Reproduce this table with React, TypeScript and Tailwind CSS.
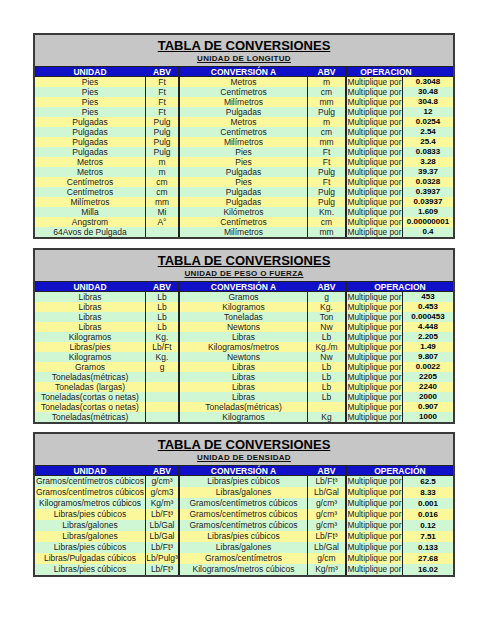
import React from "react";

type Row = [string, string, string, string, string];

type Props = {
  subtitle: string;
  conv: string;
  op: string;
  rows: Row[];
  startGreen?: boolean;
  rowH: string;
  opShift?: boolean;
};

const longitud: Row[] = [
  ["Pies", "Ft", "Metros", "m", "0.3048"],
  ["Pies", "Ft", "Centímetros", "cm", "30.48"],
  ["Pies", "Ft", "Milímetros", "mm", "304.8"],
  ["Pies", "Ft", "Pulgadas", "Pulg", "12"],
  ["Pulgadas", "Pulg", "Metros", "m", "0.0254"],
  ["Pulgadas", "Pulg", "Centímetros", "cm", "2.54"],
  ["Pulgadas", "Pulg", "Milímetros", "mm", "25.4"],
  ["Pulgadas", "Pulg", "Pies", "Ft", "0.0833"],
  ["Metros", "m", "Pies", "Ft", "3.28"],
  ["Metros", "m", "Pulgadas", "Pulg", "39.37"],
  ["Centímetros", "cm", "Pies", "Ft", "0.0328"],
  ["Centímetros", "cm", "Pulgadas", "Pulg", "0.3937"],
  ["Milímetros", "mm", "Pulgadas", "Pulg", "0.03937"],
  ["Milla", "Mi", "Kilómetros", "Km.", "1.609"],
  ["Angstrom", "A°", "Centímetros", "cm", "0.00000001"],
  ["64Avos de Pulgada", "", "Milímetros", "mm", "0.4"],
];

const peso: Row[] = [
  ["Libras", "Lb", "Gramos", "g", "453"],
  ["Libras", "Lb", "Kilogramos", "Kg.", "0.453"],
  ["Libras", "Lb", "Toneladas", "Ton", "0.000453"],
  ["Libras", "Lb", "Newtons", "Nw", "4.448"],
  ["Kilogramos", "Kg.", "Libras", "Lb", "2.205"],
  ["Libras/pies", "Lb/Ft", "Kilogramos/metros", "Kg./m", "1.49"],
  ["Kilogramos", "Kg.", "Newtons", "Nw", "9.807"],
  ["Gramos", "g", "Libras", "Lb", "0.0022"],
  ["Toneladas(métricas)", "", "Libras", "Lb", "2205"],
  ["Toneladas (largas)", "", "Libras", "Lb", "2240"],
  ["Toneladas(cortas o netas)", "", "Libras", "Lb", "2000"],
  ["Toneladas(cortas o netas)", "", "Toneladas(métricas)", "", "0.907"],
  ["Toneladas(métricas)", "", "Kilogramos", "Kg", "1000"],
];

const densidad: Row[] = [
  ["Gramos/centímetros cúbicos", "g/cm³", "Libras/pies cúbicos", "Lb/Ft³", "62.5"],
  ["Gramos/centímetros cúbicos", "g/cm3", "Libras/galones", "Lb/Gal", "8.33"],
  ["Kilogramos/metros cúbicos", "Kg/m³", "Gramos/centímetros cúbicos", "g/cm³", "0.001"],
  ["Libras/pies cúbicos", "Lb/Ft³", "Gramos/centímetros cúbicos", "g/cm³", "0.016"],
  ["Libras/galones", "Lb/Gal", "Gramos/centímetros cúbicos", "g/cm³", "0.12"],
  ["Libras/galones", "Lb/Gal", "Libras/pies cúbicos", "Lb/Ft³", "7.51"],
  ["Libras/pies cúbicos", "Lb/Ft³", "Libras/galones", "Lb/Gal", "0.133"],
  ["Libras/Pulgadas cúbicos", "Lb/Pulg³", "Gramos/centímetros", "g/cm", "27.68"],
  ["Libras/pies cúbicos", "Lb/Ft³", "Kilogramos/metros cúbicos", "Kg/m³", "16.02"],
];

const cols = "grid grid-cols-[111px_34px_128px_39px_56px_50px]";

const ConversionTable = ({ subtitle, conv, op, rows, startGreen, rowH, opShift }: Props) => {
  return (
    <div className="w-[422px] border-2 border-[#3a3a3a] bg-white">
      <div className="h-[32px] bg-[#c6c6c6] border-b border-[#222] flex flex-col items-center pt-[3px]">
        <h1 className="text-[13px] leading-[15px] font-bold underline underline-offset-[1px] text-black">
          TABLA DE CONVERSIONES
        </h1>
        <h2 className="text-[8px] leading-[9px] font-bold underline tracking-[0.3px] text-[#111] mt-[1px]">
          {subtitle}
        </h2>
      </div>
      <div className={`${cols} h-[10px] bg-[#1010c8] text-white font-bold text-[8.5px] leading-[10px] border-b border-[#222]`}>
        <div className="text-center border-r border-[#222]">UNIDAD</div>
        <div className="text-center border-r-2 border-[#222]">ABV</div>
        <div className="text-center border-r border-[#222]">{conv}</div>
        <div className="text-center border-r-2 border-[#222]">ABV</div>
        <div className={`col-span-2 text-center ${opShift ? "pr-[28px]" : ""}`}>{op}</div>
      </div>
      {rows.map((r, i) => {
        const green = startGreen ? i % 2 === 0 : i % 2 === 1;
        const bg = green ? "bg-[#d0f7d4]" : "bg-[#fbf89c]";
        return (
          <div
            key={i}
            className={`${cols} ${rowH} ${bg} text-[8.5px] text-[#1c1c1c] whitespace-nowrap`}
          >
            <div className="flex items-center justify-center overflow-hidden border-r border-[#222]">{r[0]}</div>
            <div className="flex items-center justify-center overflow-hidden border-r-2 border-[#222]">{r[1]}</div>
            <div className="flex items-center justify-center overflow-hidden border-r border-[#222]">{r[2]}</div>
            <div className="flex items-center justify-center overflow-hidden border-r-2 border-[#222]">{r[3]}</div>
            <div className="flex items-center pl-[0.5px] overflow-hidden border-r border-[#222] text-[8.3px]">Multiplique por</div>
            <div className="flex items-center justify-center overflow-hidden font-bold text-black text-[8px]">{r[4]}</div>
          </div>
        );
      })}
    </div>
  );
};

export default function App() {
  return (
    <div
      className="w-[495px] h-[640px] bg-white pt-[33px] pl-[33px] flex flex-col gap-[9px]"
      style={{ fontFamily: '"Liberation Sans", Arial, sans-serif' }}
    >
      <ConversionTable
        subtitle="UNIDAD DE LONGITUD"
        conv="CONVERSIÓN A"
        op="OPERACION"
        rows={longitud}
        rowH="h-[10px]"
        opShift
      />
      <ConversionTable
        subtitle="UNIDAD DE PESO O FUERZA"
        conv="CONVERSIÓN A"
        op="OPERACION"
        rows={peso}
        startGreen
        rowH="h-[10px]"
      />
      <div className="-mt-[1px]">
        <ConversionTable
          subtitle="UNIDAD DE DENSIDAD"
          conv="CONVERSIÓN A"
          op="OPERACIÓN"
          rows={densidad}
          startGreen
          rowH="h-[11px]"
        />
      </div>
    </div>
  );
}
